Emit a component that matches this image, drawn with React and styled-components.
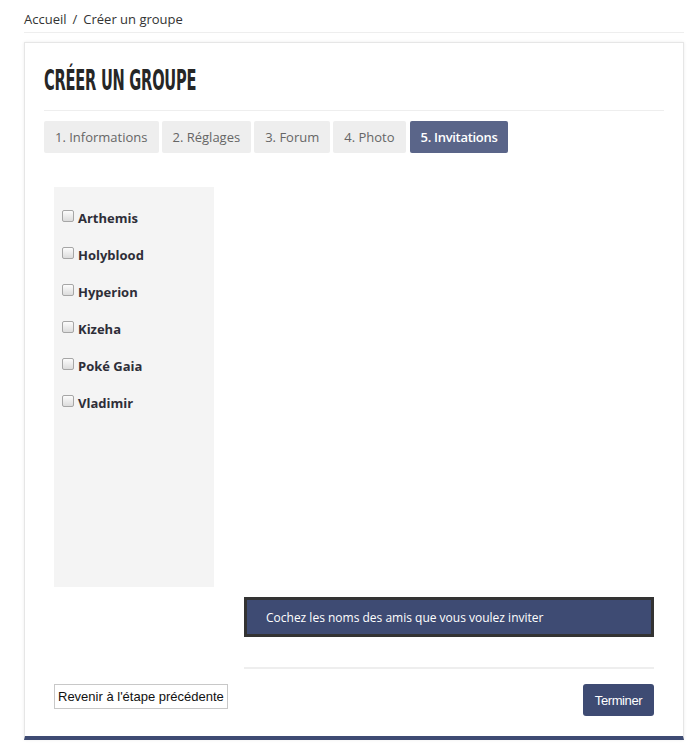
import React from "react";
import styled, { createGlobalStyle } from "styled-components";

const Global = createGlobalStyle`
  * { box-sizing: border-box; }
  body {
    margin: 0;
    background: #fff;
    font-family: "Open Sans", "Noto Sans", sans-serif;
    color: #333;
  }
`;

const Page = styled.div`
  width: 699px;
  padding: 10px 15px 16px 24px;
`;

const Breadcrumb = styled.nav`
  font-size: 13px;
  line-height: 18px;
  color: #333;
  padding-bottom: 4px;
  border-bottom: 1px solid #eee;
  width: 660px;
  span { margin: 0 6px; }
`;

const Card = styled.section`
  margin-top: 9px;
  width: 660px;
  border: 1px solid #e6e6e6;
  border-bottom: 4px solid #3e4b73;
  box-shadow: 0 0 3px rgba(0, 0, 0, 0.08);
  padding: 19px 19px 20px 19px;
`;

const TitleBar = styled.div`
  border-bottom: 1px solid #eee;
  height: 49px;
  padding-top: 5px;
`;

const TitleText = styled.h1`
  margin: 0;
  font-family: "Liberation Sans Narrow", "DejaVu Sans Condensed", sans-serif;
  font-weight: 700;
  font-size: 28px;
  line-height: 28px;
  color: #262626;
  letter-spacing: -0.4px;
  transform: scaleX(0.58);
  transform-origin: left center;
  white-space: nowrap;
`;

const Tabs = styled.div`
  display: flex;
  gap: 3px;
  margin-top: 10px;
`;

const Tab = styled.div`
  height: 32px;
  padding: 0 11px;
  display: flex;
  align-items: center;
  font-size: 13px;
  border-radius: 2px;
  background: ${(p) => (p.$active ? "#5a6589" : "#eeeeee")};
  color: ${(p) => (p.$active ? "#fff" : "#666")};
  font-weight: ${(p) => (p.$active ? 600 : 400)};
  letter-spacing: ${(p) => (p.$active ? "-0.3px" : "0")};
  margin-left: ${(p) => (p.$active ? "1px" : "0")};
`;

const Body = styled.div`
  display: grid;
  grid-template-columns: 160px 410px;
  column-gap: 30px;
  padding: 0 10px;
  margin-top: 34px;
`;

const FriendList = styled.ul`
  list-style: none;
  margin: 0;
  padding: 12px 8px 0;
  height: 400px;
  background: #f4f4f4;
`;

const Friend = styled.li`
  display: flex;
  align-items: center;
  height: 37px;
  font-size: 13px;
  font-weight: 700;
  color: #2e2e38;
  label { display: flex; align-items: center; }
`;

const Check = styled.input.attrs({ type: "checkbox" })`
  appearance: none;
  width: 12px;
  height: 12px;
  margin: -3px 4px 0 0;
  border: 1px solid #a6a6a6;
  border-radius: 2px;
  background: linear-gradient(#fcfcfc, #dcdcdc);
`;

const Info = styled.div`
  grid-column: 2;
  margin-top: 10px;
  height: 40px;
  background: #3e4b73;
  border: 3px solid #333;
  color: #fff;
  font-size: 12px;
  display: flex;
  align-items: center;
  padding-left: 19px;
`;

const Rule = styled.hr`
  grid-column: 2;
  margin: 30px 0 0;
  border: 0;
  border-top: 2px solid #eee;
`;

const Footer = styled.div`
  grid-column: 1 / span 2;
  display: flex;
  justify-content: space-between;
  align-items: flex-start;
  margin-top: 15px;
`;

const BackButton = styled.button`
  font-family: "Liberation Sans", Arial, sans-serif;
  font-size: 13px;
  height: 25px;
  padding: 0 3px;
  background: #fff;
  border: 1px solid #c8c8c8;
  color: #111;
  white-space: nowrap;
`;

const FinishButton = styled.button`
  font-family: "Liberation Sans", Arial, sans-serif;
  font-size: 13px;
  letter-spacing: -0.4px;
  height: 32px;
  width: 71px;
  padding: 0;
  background: #3e4b73;
  border: 0;
  border-radius: 3px;
  color: #fff;
`;

const friends = ["Arthemis", "Holyblood", "Hyperion", "Kizeha", "Poké Gaia", "Vladimir"];
const tabs = ["1. Informations", "2. Réglages", "3. Forum", "4. Photo", "5. Invitations"];

export default function App() {
  return (
    <Page>
      <Global />
      <Breadcrumb>
        Accueil<span>/</span>Créer un groupe
      </Breadcrumb>
      <Card>
        <TitleBar>
          <TitleText>CRÉER UN GROUPE</TitleText>
        </TitleBar>
        <Tabs>
          {tabs.map((t, i) => (
            <Tab key={t} $active={i === 4}>
              {t}
            </Tab>
          ))}
        </Tabs>
        <Body>
          <FriendList>
            {friends.map((f) => (
              <Friend key={f}>
                <label>
                  <Check />
                  {f}
                </label>
              </Friend>
            ))}
          </FriendList>
          <div />
          <Info>Cochez les noms des amis que vous voulez inviter</Info>
          <Rule />
          <Footer>
            <BackButton>Revenir à l'étape précédente</BackButton>
            <FinishButton>Terminer</FinishButton>
          </Footer>
        </Body>
      </Card>
    </Page>
  );
}
